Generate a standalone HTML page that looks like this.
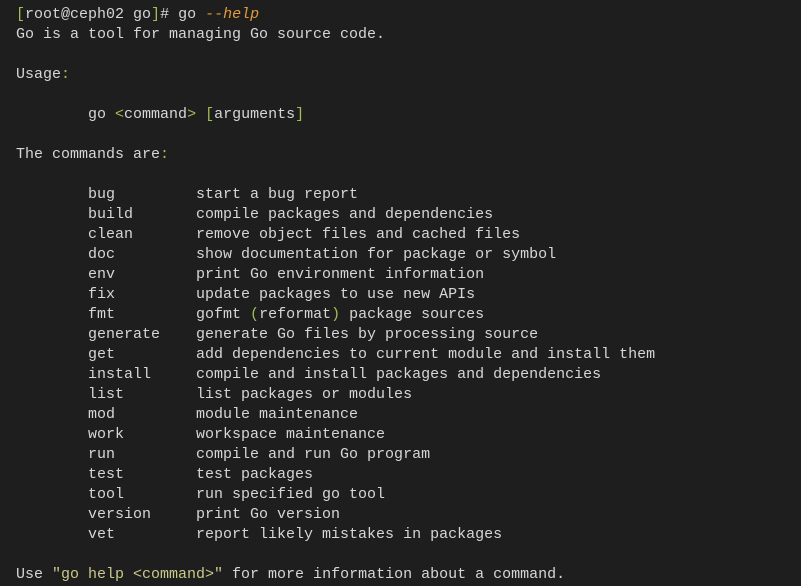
<!DOCTYPE html>
<html><head><style>
html,body{margin:0;padding:0;background:#1e1e1e;width:801px;height:586px;overflow:hidden}
pre{margin:0;padding:5px 0 0 16px;font-family:"Liberation Mono",monospace;font-size:15px;line-height:20px;color:#d6d6d6;white-space:pre}
.g{color:#9fbf56}.o{color:#e39a3a;font-style:italic}.y{color:#c9c98a}
</style></head><body><pre><span class="g">[</span>root@ceph02 go<span class="g">]</span># go <span class="o">--help</span>
Go is a tool for managing Go source code.

Usage<span class="g">:</span>

        go <span class="g">&lt;</span>command<span class="g">&gt;</span> <span class="g">[</span>arguments<span class="g">]</span>

The commands are<span class="g">:</span>

        bug         start a bug report
        build       compile packages and dependencies
        clean       remove object files and cached files
        doc         show documentation for package or symbol
        env         print Go environment information
        fix         update packages to use new APIs
        fmt         gofmt <span class="g">(</span>reformat<span class="g">)</span> package sources
        generate    generate Go files by processing source
        get         add dependencies to current module and install them
        install     compile and install packages and dependencies
        list        list packages or modules
        mod         module maintenance
        work        workspace maintenance
        run         compile and run Go program
        test        test packages
        tool        run specified go tool
        version     print Go version
        vet         report likely mistakes in packages

Use <span class="y">"go help &lt;command&gt;"</span> for more information about a command.</pre></body></html>
